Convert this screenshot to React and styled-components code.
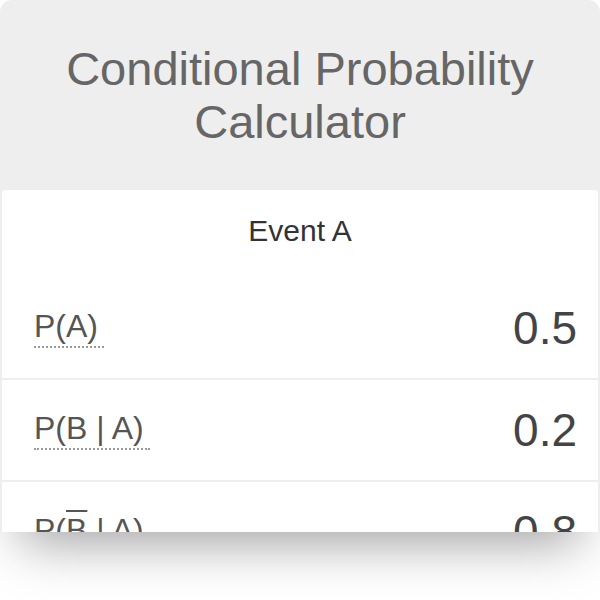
import React from 'react';
import styled, {createGlobalStyle} from 'styled-components';

const GlobalStyle = createGlobalStyle`
  body {
    margin: 0;
    background: #fff;
    font-family: "Liberation Sans", Arial, sans-serif;
  }
`;

const Page = styled.div`
  height: 600px;
  overflow: hidden;
`;

const Widget = styled.div`
  width: 600px;
  height: 532px;
  overflow: hidden;
  display: flex;
  flex-direction: column;
  background: #eeeeee;
  border-radius: 12px 12px 0 0;
  box-shadow: 0 30px 50px -20px rgba(0, 0, 0, 0.38);
`;

const Title = styled.h1`
  margin: 0;
  height: 190px;
  flex-shrink: 0;
  display: flex;
  align-items: center;
  justify-content: center;
  text-align: center;
  font-size: 47px;
  line-height: 53px;
  font-weight: normal;
  color: #666;
`;

const Panel = styled.div`
  flex: 1;
  margin: 0 2px;
  background: #fff;
  border-radius: 4px 4px 0 0;
`;

const SectionTitle = styled.div`
  height: 82px;
  padding-bottom: 6px;
  display: flex;
  align-items: center;
  justify-content: center;
  font-size: 30px;
  color: #333;
`;

const Row = styled.div`
  height: 100px;
  display: flex;
  align-items: center;
  justify-content: space-between;
  padding: 0 21px 0 32px;
  border-bottom: 2px solid #eeeeee;
`;

const Label = styled.span`
  display: inline-block;
  font-size: 32px;
  line-height: 1.15;
  color: #555;
  padding: 0 6px 2px 0;
  border-bottom: 2px dotted #999;
`;

const Bar = styled.span`
  text-decoration: overline;
  text-decoration-thickness: 2px;
`;

const Value = styled.span`
  font-size: 46px;
  color: #444;
`;

const rows = [
  {label: <>P(A)</>, value: '0.5'},
  {label: <>P(B | A)</>, value: '0.2'},
  {label: <>P(<Bar>B</Bar> | A)</>, value: '0.8'},
];

function App() {
  return (
    <Page>
      <GlobalStyle />
      <Widget>
        <Title>
          Conditional Probability
          <br />
          Calculator
        </Title>
        <Panel>
          <SectionTitle>Event A</SectionTitle>
          {rows.map((row, i) => (
            <Row key={i}>
              <Label>{row.label}</Label>
              <Value>{row.value}</Value>
            </Row>
          ))}
        </Panel>
      </Widget>
    </Page>
  );
}

export default App;
